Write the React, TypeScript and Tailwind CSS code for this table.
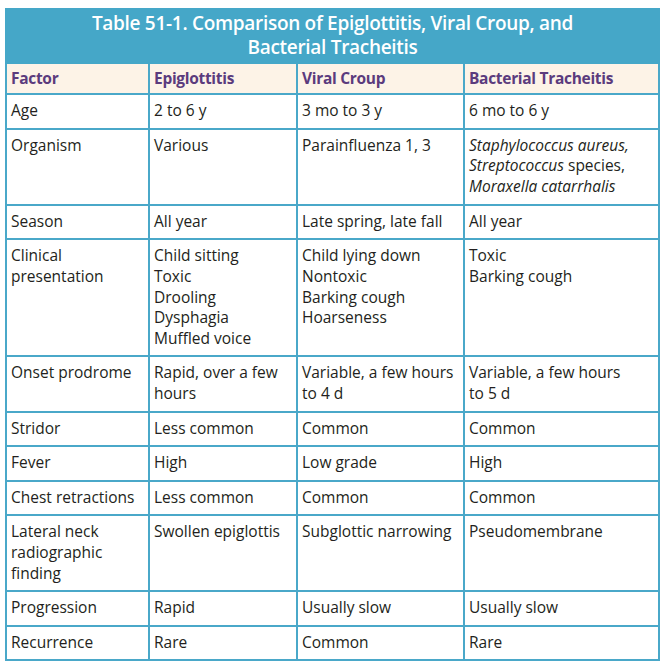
type Cell = React.ReactNode;

const data: Cell[][] = [
  ['Age', '2 to 6 y', '3 mo to 3 y', '6 mo to 6 y'],
  [
    'Organism',
    'Various',
    'Parainfluenza 1, 3',
    <>
      <i>Staphylococcus aureus,</i>
      <br />
      <i>Streptococcus</i> species,
      <br />
      <i>Moraxella catarrhalis</i>
    </>,
  ],
  ['Season', 'All year', 'Late spring, late fall', 'All year'],
  [
    <>Clinical<br />presentation</>,
    <>Child sitting<br />Toxic<br />Drooling<br />Dysphagia<br />Muffled voice</>,
    <>Child lying down<br />Nontoxic<br />Barking cough<br />Hoarseness</>,
    <>Toxic<br />Barking cough</>,
  ],
  ['Onset prodrome', <>Rapid, over a few<br />hours</>, <>Variable, a few hours<br />to 4 d</>, <>Variable, a few hours<br />to 5 d</>],
  ['Stridor', 'Less common', 'Common', 'Common'],
  ['Fever', 'High', 'Low grade', 'High'],
  ['Chest retractions', 'Less common', 'Common', 'Common'],
  [<>Lateral neck<br />radiographic<br />finding</>, 'Swollen epiglottis', 'Subglottic narrowing', 'Pseudomembrane'],
  ['Progression', 'Rapid', 'Usually slow', 'Usually slow'],
  ['Recurrence', 'Rare', 'Common', 'Rare'],
];

const headers = ['Factor', 'Epiglottitis', 'Viral Croup', 'Bacterial Tracheitis'];

export default function App() {
  return (
    <div className="w-[663px] h-[663px] bg-white pt-[8px] pl-[5px]" style={{ fontFamily: '"Open Sans", "Liberation Sans", sans-serif' }}>
      <table className="w-[653px] border-collapse table-fixed text-[15.5px] leading-[20.7px] text-[#231f20]">
        <colgroup>
          <col className="w-[143px]" />
          <col className="w-[148px]" />
          <col className="w-[167px]" />
          <col className="w-[195px]" />
        </colgroup>
        <thead>
          <tr>
            <th
              colSpan={4}
              className="bg-[#45a7c8] border-2 border-[#45a7c8] text-white font-semibold text-[19px] leading-[24px] pt-[1px] pb-[3px] text-center tracking-[-0.3px]"
            >
              Table 51-1. Comparison of Epiglottitis, Viral Croup, and
              <br />
              Bacterial Tracheitis
            </th>
          </tr>
          <tr className="bg-[#fdf3e7]">
            {headers.map((h) => (
              <th
                key={h}
                className="border-2 border-[#4aa8c9] text-left font-bold text-[#5b3b7d] px-[4px] pt-[4px] pb-[4.5px] tracking-[-0.3px]"
              >
                {h}
              </th>
            ))}
          </tr>
        </thead>
        <tbody>
          {data.map((r, i) => (
            <tr key={i}>
              {r.map((c, j) => (
                <td key={j} className="border-2 border-[#4aa8c9] align-top px-[4px] pt-[5px] pb-[6.8px]">
                  {c}
                </td>
              ))}
            </tr>
          ))}
        </tbody>
      </table>
    </div>
  );
}
